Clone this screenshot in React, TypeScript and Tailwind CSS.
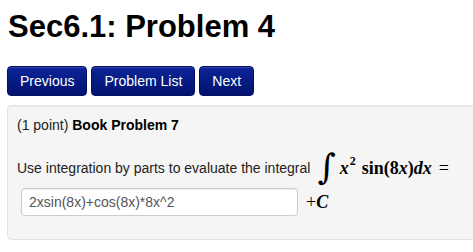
import React from 'react';

const navBtn =
  'h-[30px] px-[12px] rounded-[4px] border border-[#020f5c] bg-gradient-to-b from-[#0c2499] to-[#02136f] text-white text-[14px] leading-[20px] shadow-[inset_0_1px_0_rgba(255,255,255,0.15)]';

const MathIntegral: React.FC = () => (
  <span
    className="flex items-center text-[18px] text-black"
    style={{ fontFamily: '"Liberation Serif", "DejaVu Serif", serif' }}
  >
    <span
      className="text-[35px] leading-none mr-[4px] -mt-[1px]"
      style={{ fontFamily: '"DejaVu Serif", serif' }}
    >
      ∫
    </span>
    <span className="font-bold italic">x</span>
    <sup className="font-bold text-[12px] -top-[7px] ml-[1px]">2</sup>
    <span className="font-bold ml-[6px]">sin(8</span>
    <span className="font-bold italic">x</span>
    <span className="font-bold">)</span>
    <span className="font-bold italic">dx</span>
    <span className="ml-[7px]">=</span>
  </span>
);

export default function App() {
  return (
    <div
      className="w-[473px] h-[252px] overflow-hidden bg-white text-[#333] pt-[7px]"
      style={{ fontFamily: '"Liberation Sans", Arial, sans-serif' }}
    >
      <h2 className="ml-[8px] text-[31px] leading-[40px] font-bold text-black">
        Sec6.1: Problem 4
      </h2>

      <div className="flex gap-[4px] ml-[7px] mt-[19px]">
        <button className={navBtn}>Previous</button>
        <button className={navBtn}>Problem List</button>
        <button className={navBtn}>Next</button>
      </div>

      <div className="ml-[7px] mt-[9px] w-[500px] bg-[#f5f5f5] border border-[#e3e3e3] rounded-[4px] shadow-[inset_0_1px_1px_rgba(0,0,0,0.05)] pl-[9px] pt-[9px] pb-[23px] text-[14px] leading-[20px] text-[#222]">
        <div>
          (1 point) <b className="text-black">Book Problem 7</b>
        </div>

        <div className="flex items-center h-[40px] mt-[13px]">
          <span>Use integration by parts to evaluate the integral</span>
          <span className="ml-[7px]">
            <MathIntegral />
          </span>
        </div>

        <div className="flex items-center">
          <input
            readOnly
            value="2xsin(8x)+cos(8x)*8x^2"
            className="ml-[4px] w-[277px] h-[28px] px-[7px] bg-white border border-[#cccccc] rounded-[4px] text-[14px] text-[#555] shadow-[inset_0_1px_1px_rgba(0,0,0,0.075)] outline-none"
            style={{ fontFamily: '"Liberation Sans", Arial, sans-serif' }}
          />
          <span
            className="ml-[8px] text-[18px] text-black"
            style={{ fontFamily: '"Liberation Serif", serif' }}
          >
            +<i className="font-bold">C</i>
          </span>
        </div>
      </div>
    </div>
  );
}
